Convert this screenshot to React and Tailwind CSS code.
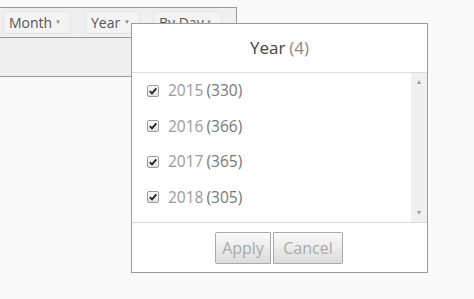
import { useState } from 'react';

const years = [
  { year: '2015', count: 330 },
  { year: '2016', count: 366 },
  { year: '2017', count: 365 },
  { year: '2018', count: 305 },
];

function ToolButton({ label, width }) {
  return (
    <div
      className={`flex h-[23px] shrink-0 items-center justify-between whitespace-nowrap rounded-[3px] border border-[#e4e4e4] bg-[#f3f3f3] pl-[5px] pr-[9px] text-[14px] text-[#555] ${width}`}
    >
      <span>{label}</span>
      <span className="text-[6px] text-[#888]">▼</span>
    </div>
  );
}

export default function App() {
  const [checked, setChecked] = useState(years.map(() => true));

  const toggle = (i) => {
    setChecked((prev) => prev.map((v, j) => (j === i ? !v : v)));
  };

  return (
    <div
      className="relative h-[299px] w-[474px] overflow-hidden bg-[#f9f9f9]"
      style={{ fontFamily: '"Open Sans", "Liberation Sans", sans-serif' }}
    >
      {/* toolbar */}
      <div className="mt-[7px] w-[237px] border-t border-r border-b border-[#9a9a9a] bg-[#efefef]">
        <div className="flex h-[30px] items-center border-b border-[#9a9a9a] pl-[3px]">
          <ToolButton label="Month" width="w-[68px]" />
          <div className="ml-[14px]">
            <ToolButton label="Year" width="w-[55px]" />
          </div>
          <div className="ml-[13px]">
            <ToolButton label="By Day" width="w-[69px]" />
          </div>
        </div>
        <div className="h-[38px]" />
      </div>

      {/* popup */}
      <div className="absolute left-[131px] top-[23px] w-[297px] border border-[#9a9a9a] bg-white">
        <div className="flex h-[49px] items-center justify-center border-b border-[#dcdcdc] text-[17px]">
          <span className="text-[#444]">Year</span>
          <span className="ml-1 text-[#888]">(4)</span>
        </div>
        <div className="flex h-[150px] border-b border-[#dcdcdc]">
          <div className="flex-1">
            {years.map((y, i) => (
              <label key={y.year} className="flex h-[35.5px] cursor-pointer items-center pl-[15px]">
                <input
                  type="checkbox"
                  checked={checked[i]}
                  onChange={() => toggle(i)}
                  className="sr-only"
                />
                <span className="flex h-[12px] w-[12px] items-center justify-center rounded-[2px] border border-[#9a9a9a] bg-gradient-to-b from-[#fcfcfc] to-[#e2e2e2]">
                  {checked[i] && (
                    <svg viewBox="0 0 10 10" className="h-[10px] w-[10px]">
                      <path d="M1.8 5.2 L4 7.4 L8.3 2.4" fill="none" stroke="#222" strokeWidth="1.8" />
                    </svg>
                  )}
                </span>
                <span className="ml-[9px] text-[15.5px] text-[#999]">{y.year}</span>
                <span className="ml-[3px] text-[15.5px] text-[#777]">({y.count})</span>
              </label>
            ))}
          </div>
          <div className="flex w-[16px] flex-col items-center justify-between bg-[#f0f0f0] py-[4px] text-[7px] text-[#a0a0a0]">
            <span>▲</span>
            <span>▼</span>
          </div>
        </div>
        <div className="flex h-[49px] items-center justify-center pr-[1px]">
          <button className="h-[32px] w-[56px] rounded-l-[2px] border border-[#aaa] bg-gradient-to-b from-[#fafafa] to-[#dcdcdc] text-[16px] text-[#aaa]">
            Apply
          </button>
          <button className="ml-[2px] h-[32px] w-[70px] rounded-r-[2px] border border-[#aaa] bg-gradient-to-b from-[#fafafa] to-[#dcdcdc] text-[16px] text-[#aaa]">
            Cancel
          </button>
        </div>
      </div>
    </div>
  );
}
